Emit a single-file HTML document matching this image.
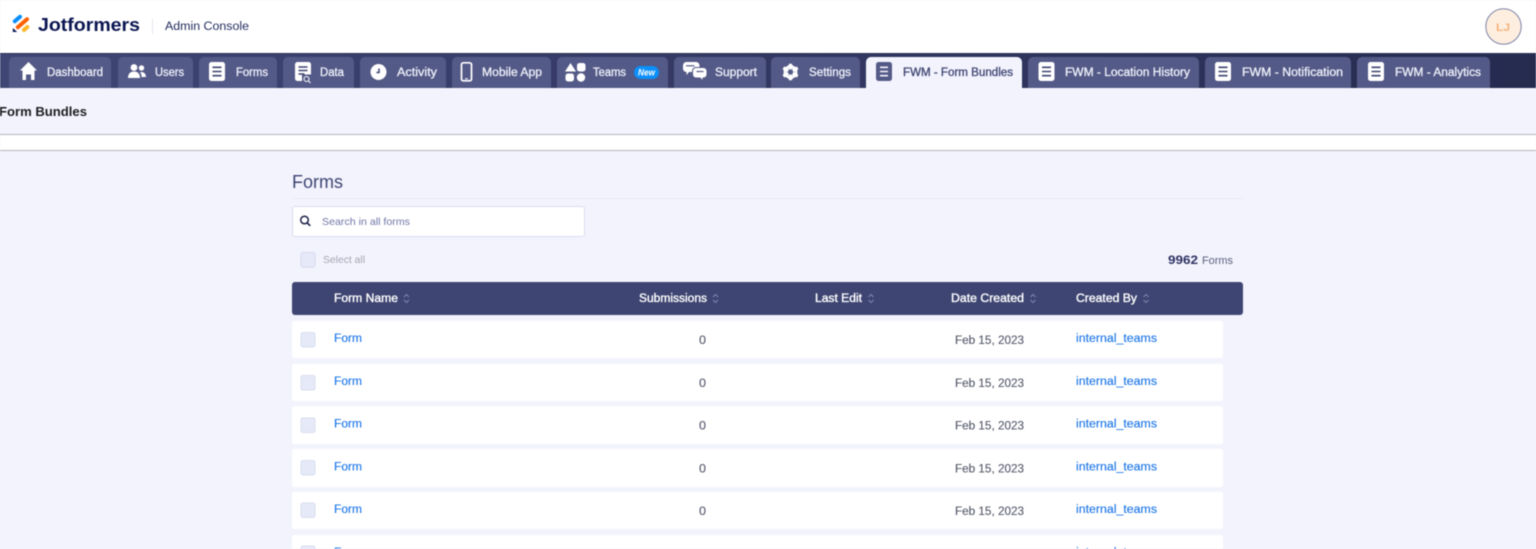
<!DOCTYPE html>
<html><head><meta charset="utf-8"><title>Jotformers Admin Console</title>
<style>
html,body{margin:0;padding:0;background:#f3f3fd;width:1536px;height:549px;overflow:hidden}
svg{display:block;filter:blur(.45px)}
text{font-family:"Liberation Sans",sans-serif}
.t{font-size:11.5px;fill:#eef0fa;stroke:#eef0fa;stroke-width:.3px}
.h{font-size:11.5px;fill:#fff;stroke:#fff;stroke-width:.35px}
.l{font-size:11.5px;fill:#1a75e8;stroke:#1a75e8;stroke-width:.12px}
.d{font-size:11.5px;fill:#55586a;stroke:#55586a;stroke-width:.12px}
.tab{fill:#545a87}
</style></head><body>
<svg width="1536" height="549" viewBox="0 0 1536 549" xmlns="http://www.w3.org/2000/svg">
<defs>
<linearGradient id="nav" x1="0" x2="1" y1="0" y2="0"><stop offset="0" stop-color="#3f4674"/><stop offset="1" stop-color="#262b50"/></linearGradient>
<g id="doc"><rect x="-8" y="-9.500" width="16" height="19" rx="2.500" fill="#fff"/><path d="M-4.500-4.200h9M-4.500 0h9M-4.500 4.200h9" stroke="#3e4572" stroke-width="1.600"/></g>
<g id="sort" fill="none" stroke="#7f86ad" stroke-width="1"><path d="M-2.500-1.500 0-4 2.500-1.500M-2.500 1.500 0 4 2.500 1.500"/></g>
</defs>
<rect width="1536" height="53" fill="#fff"/>
<!-- logo -->
<g fill="none" stroke-linecap="round">
<path d="M14.800 21.300 20 16.800" stroke="#0a8ffb" stroke-width="4"/>
<path d="M17.800 27.200 27 19.200" stroke="#ff6100" stroke-width="4"/>
<path d="M24 30 27.300 27" stroke="#ffb629" stroke-width="4"/>
</g>
<path d="M12.800 28v4h4.400z" fill="#0a1551"/>
<text x="38" y="31" font-size="18.500" font-weight="bold" fill="#0a1551" textLength="102" lengthAdjust="spacingAndGlyphs">Jotformers</text>
<rect x="152" y="19" width="1" height="15" fill="#e6e7ef"/>
<text x="165" y="30" font-size="11.500" fill="#1f2a5c" textLength="84" lengthAdjust="spacingAndGlyphs">Admin Console</text>
<circle cx="1503.500" cy="26.500" r="17.700" fill="#fdeee0" stroke="#7d82a8" stroke-width="1"/>
<text x="1496" y="31" font-size="11" font-weight="bold" fill="#f8b27a" textLength="14" lengthAdjust="spacingAndGlyphs">LJ</text>

<!-- nav -->
<rect y="53" width="1536" height="35" fill="url(#nav)"/>
<rect y="53" width="1536" height="1" fill="#2a2f58"/>
<g class="tab">
<path d="M9 88V62a5 5 0 0 1 5-5h92a5 5 0 0 1 5 5v26z"/>
<path d="M118 88V62a5 5 0 0 1 5-5h65a5 5 0 0 1 5 5v26z"/>
<path d="M199 88V62a5 5 0 0 1 5-5h68a5 5 0 0 1 5 5v26z"/>
<path d="M283 88V62a5 5 0 0 1 5-5h61a5 5 0 0 1 5 5v26z"/>
<path d="M360 88V62a5 5 0 0 1 5-5h76a5 5 0 0 1 5 5v26z"/>
<path d="M452 88V62a5 5 0 0 1 5-5h89a5 5 0 0 1 5 5v26z"/>
<path d="M557 88V62a5 5 0 0 1 5-5h101a5 5 0 0 1 5 5v26z"/>
<path d="M674 88V62a5 5 0 0 1 5-5h82a5 5 0 0 1 5 5v26z"/>
<path d="M771 88V62a5 5 0 0 1 5-5h79a5 5 0 0 1 5 5v26z"/>
<path d="M1028 88V62a5 5 0 0 1 5-5h161a5 5 0 0 1 5 5v26z"/>
<path d="M1205 88V62a5 5 0 0 1 5-5h136a5 5 0 0 1 5 5v26z"/>
<path d="M1357 88V62a5 5 0 0 1 5-5h123a5 5 0 0 1 5 5v26z"/>
</g>
<path d="M866 88V62a5 5 0 0 1 5-5h146a5 5 0 0 1 5 5v26z" fill="#f3f3fd"/>

<!-- tab icons -->
<path d="M28.500 62 37 70.500h-2.500V80H31v-5.500h-5V80h-3.500v-9.500H20z" fill="#fff"/>
<g fill="#fff"><circle cx="134" cy="67.500" r="3.400"/><path d="M128 78c0-4.500 2.500-6.500 6-6.500s6 2 6 6.500z"/><circle cx="141.500" cy="68" r="2.700"/><path d="M141 72c3 0 4.800 1.500 5 5h-4.500c0-2-.2-3.500-1.500-4.500z"/></g>
<use href="#doc" x="217" y="71.500"/>
<g><rect x="295" y="62" width="16" height="19" rx="2.500" fill="#fff"/><path d="M298.500 67h9M298.500 70.500h9M298.500 74h6" stroke="#3e4572" stroke-width="1.500"/><rect x="302" y="74.500" width="10" height="9" fill="#545a87"/><circle cx="306.500" cy="79" r="2.500" fill="none" stroke="#fff" stroke-width="1"/><path d="m308.500 81 2 2" stroke="#fff" stroke-width="1"/></g>
<circle cx="378.500" cy="72" r="8" fill="#fff"/><path d="M379 68.500v4h-2.500" fill="none" stroke="#3e4572" stroke-width="1.500"/>
<rect x="461.500" y="62.800" width="10" height="18" rx="1.800" fill="none" stroke="#fff" stroke-width="1.700"/><rect x="465" y="78.300" width="3" height="1" fill="#fff"/>
<g fill="#fff"><path d="M570.500 63 576 71.500h-11z"/><rect x="577" y="63" width="8.500" height="8.500" rx="2.500"/><rect x="565.500" y="73.500" width="8.500" height="8" rx="2.500"/><circle cx="581" cy="77.500" r="4.200"/></g>
<g><path d="M687 62h9a3.500 3.500 0 0 1 3.500 3.500v3a3.500 3.500 0 0 1-3.500 3.500h-7l-2.500 3v-3h0a3.500 3.500 0 0 1-3.500-3.500v-3a3.500 3.500 0 0 1 3.500-3.500z" fill="#fff"/><path d="M686 65.800h8.500" stroke="#545a87" stroke-width="1.200"/><path d="M696 67.500h7.500a3.500 3.500 0 0 1 3.500 3.500v3.500a3.500 3.500 0 0 1-3.500 3.500H703v3l-3-3h-4a3.500 3.500 0 0 1-3.500-3.500V71a3.500 3.500 0 0 1 3.500-3.500z" fill="#fff" stroke="#545a87" stroke-width="1"/><path d="M696.500 71.500h7" stroke="#545a87" stroke-width="1.200"/></g>
<g transform="translate(790.500 72)"><g fill="#fff"><rect x="-1.800" y="-8.300" width="3.600" height="16.600" rx=".8"/><rect x="-1.800" y="-8.300" width="3.600" height="16.600" rx=".8" transform="rotate(60)"/><rect x="-1.800" y="-8.300" width="3.600" height="16.600" rx=".8" transform="rotate(120)"/></g><circle r="5.700" fill="none" stroke="#fff" stroke-width="2.400"/><circle r="2.700" fill="#545a87"/></g>
<g><rect x="876" y="62" width="16" height="19" rx="2.500" fill="#545a87"/><path d="M880 67.300h8M880 71.500h8M880 75.700h8" stroke="#f3f3fd" stroke-width="1.600"/></g>
<use href="#doc" x="1046.500" y="71.500"/>
<use href="#doc" x="1223" y="71.500"/>
<use href="#doc" x="1376" y="71.500"/>

<!-- tab labels -->
<text class="t" x="47" y="76" textLength="56" lengthAdjust="spacingAndGlyphs">Dashboard</text>
<text class="t" x="155" y="76" textLength="29" lengthAdjust="spacingAndGlyphs">Users</text>
<text class="t" x="236" y="76" textLength="32" lengthAdjust="spacingAndGlyphs">Forms</text>
<text class="t" x="320" y="76" textLength="24" lengthAdjust="spacingAndGlyphs">Data</text>
<text class="t" x="397" y="76" textLength="40" lengthAdjust="spacingAndGlyphs">Activity</text>
<text class="t" x="482" y="76" textLength="60" lengthAdjust="spacingAndGlyphs">Mobile App</text>
<text class="t" x="593" y="76" textLength="33" lengthAdjust="spacingAndGlyphs">Teams</text>
<rect x="634" y="66" width="25" height="13" rx="6.500" fill="#0a8ffb"/>
<text x="638" y="75.500" font-size="9" font-weight="bold" font-style="italic" fill="#fff" textLength="17" lengthAdjust="spacingAndGlyphs">New</text>
<text class="t" x="715" y="76" textLength="42" lengthAdjust="spacingAndGlyphs">Support</text>
<text class="t" x="809" y="76" textLength="42" lengthAdjust="spacingAndGlyphs">Settings</text>
<text x="903" y="76" font-size="11.500" fill="#3e4572" stroke="#3e4572" stroke-width=".3" textLength="110" lengthAdjust="spacingAndGlyphs">FWM - Form Bundles</text>
<text class="t" x="1065" y="76" textLength="125" lengthAdjust="spacingAndGlyphs">FWM - Location History</text>
<text class="t" x="1242" y="76" textLength="101" lengthAdjust="spacingAndGlyphs">FWM - Notification</text>
<text class="t" x="1395" y="76" textLength="86" lengthAdjust="spacingAndGlyphs">FWM - Analytics</text>

<!-- subheader -->
<text x="-1" y="116" font-size="13" font-weight="bold" fill="#1b1b1f" textLength="88" lengthAdjust="spacingAndGlyphs">Form Bundles</text>
<rect y="134" width="1536" height="1" fill="#b4b4ba"/>
<rect y="135" width="1536" height="15" fill="#fff"/>
<rect y="150" width="1536" height="1" fill="#b4b4ba"/>

<!-- content -->
<text x="292" y="188" font-size="18" fill="#3e4572" textLength="51" lengthAdjust="spacingAndGlyphs">Forms</text>
<rect x="292" y="198" width="951" height="1" fill="#e8e9f5"/>
<rect x="292.500" y="206.500" width="292" height="30" rx="2.500" fill="#fff" stroke="#d9dcef"/>
<circle cx="304.500" cy="220" r="3.800" fill="none" stroke="#1c2148" stroke-width="1.500"/><path d="m307.300 223 3 2.800" stroke="#1c2148" stroke-width="1.600"/>
<text x="322" y="225" font-size="10.500" fill="#6f76a7" textLength="88" lengthAdjust="spacingAndGlyphs">Search in all forms</text>
<rect x="301" y="252.500" width="14" height="14.500" rx="2" fill="#e6eaf8" stroke="#d5d9ec"/>
<text x="323" y="263" font-size="10.500" fill="#a3a5b3" textLength="42" lengthAdjust="spacingAndGlyphs">Select all</text>
<text x="1168" y="264" font-size="11.500" font-weight="bold" fill="#2b3160" textLength="30" lengthAdjust="spacingAndGlyphs">9962</text>
<text x="1202" y="264" font-size="11" fill="#5a5f7a" textLength="31" lengthAdjust="spacingAndGlyphs">Forms</text>

<rect x="292" y="282" width="951" height="33" rx="3" fill="#3e4572"/>
<text class="h" x="334" y="302" textLength="64" lengthAdjust="spacingAndGlyphs">Form Name</text><use href="#sort" x="406.500" y="298.500"/>
<text class="h" x="639" y="302" textLength="68" lengthAdjust="spacingAndGlyphs">Submissions</text><use href="#sort" x="715.500" y="298.500"/>
<text class="h" x="815" y="302" textLength="47" lengthAdjust="spacingAndGlyphs">Last Edit</text><use href="#sort" x="871" y="298.500"/>
<text class="h" x="951" y="302" textLength="73" lengthAdjust="spacingAndGlyphs">Date Created</text><use href="#sort" x="1033" y="298.500"/>
<text class="h" x="1076" y="302" textLength="61" lengthAdjust="spacingAndGlyphs">Created By</text><use href="#sort" x="1146" y="298.500"/>

<g fill="#fff">
<rect x="292" y="321" width="931" height="37" rx="2.500"/>
<rect x="292" y="364" width="931" height="37" rx="2.500"/>
<rect x="292" y="406" width="931" height="38" rx="2.500"/>
<rect x="292" y="449" width="931" height="38" rx="2.500"/>
<rect x="292" y="492" width="931" height="37" rx="2.500"/>
<rect x="292" y="535" width="931" height="30" rx="2.500"/>
</g>
<g fill="#e6eaf8" stroke="#d9ddef">
<rect x="301" y="332.500" width="14" height="14.500" rx="2"/>
<rect x="301" y="375.500" width="14" height="14.500" rx="2"/>
<rect x="301" y="418" width="14" height="14.500" rx="2"/>
<rect x="301" y="460.500" width="14" height="14.500" rx="2"/>
<rect x="301" y="503" width="14" height="14.500" rx="2"/>
<rect x="301" y="546" width="14" height="14.500" rx="2"/>
</g>

<text class="l" x="334" y="342" textLength="28" lengthAdjust="spacingAndGlyphs">Form</text>
<text class="d" x="699" y="344" textLength="7" lengthAdjust="spacingAndGlyphs">0</text>
<text class="d" x="955" y="344" textLength="69" lengthAdjust="spacingAndGlyphs">Feb 15, 2023</text>
<text class="l" x="1076" y="342" textLength="81" lengthAdjust="spacingAndGlyphs">internal_teams</text>

<text class="l" x="334" y="385" textLength="28" lengthAdjust="spacingAndGlyphs">Form</text>
<text class="d" x="699" y="387" textLength="7" lengthAdjust="spacingAndGlyphs">0</text>
<text class="d" x="955" y="387" textLength="69" lengthAdjust="spacingAndGlyphs">Feb 15, 2023</text>
<text class="l" x="1076" y="385" textLength="81" lengthAdjust="spacingAndGlyphs">internal_teams</text>

<text class="l" x="334" y="427.500" textLength="28" lengthAdjust="spacingAndGlyphs">Form</text>
<text class="d" x="699" y="429.500" textLength="7" lengthAdjust="spacingAndGlyphs">0</text>
<text class="d" x="955" y="429.500" textLength="69" lengthAdjust="spacingAndGlyphs">Feb 15, 2023</text>
<text class="l" x="1076" y="427.500" textLength="81" lengthAdjust="spacingAndGlyphs">internal_teams</text>

<text class="l" x="334" y="470.500" textLength="28" lengthAdjust="spacingAndGlyphs">Form</text>
<text class="d" x="699" y="472.500" textLength="7" lengthAdjust="spacingAndGlyphs">0</text>
<text class="d" x="955" y="472.500" textLength="69" lengthAdjust="spacingAndGlyphs">Feb 15, 2023</text>
<text class="l" x="1076" y="470.500" textLength="81" lengthAdjust="spacingAndGlyphs">internal_teams</text>

<text class="l" x="334" y="513" textLength="28" lengthAdjust="spacingAndGlyphs">Form</text>
<text class="d" x="699" y="515" textLength="7" lengthAdjust="spacingAndGlyphs">0</text>
<text class="d" x="955" y="515" textLength="69" lengthAdjust="spacingAndGlyphs">Feb 15, 2023</text>
<text class="l" x="1076" y="513" textLength="81" lengthAdjust="spacingAndGlyphs">internal_teams</text>

<text class="l" x="334" y="556" textLength="28" lengthAdjust="spacingAndGlyphs">Form</text>
<text class="d" x="699" y="558" textLength="7" lengthAdjust="spacingAndGlyphs">0</text>
<text class="d" x="955" y="558" textLength="69" lengthAdjust="spacingAndGlyphs">Feb 15, 2023</text>
<text class="l" x="1076" y="556" textLength="81" lengthAdjust="spacingAndGlyphs">internal_teams</text>
</svg>
</body></html>
